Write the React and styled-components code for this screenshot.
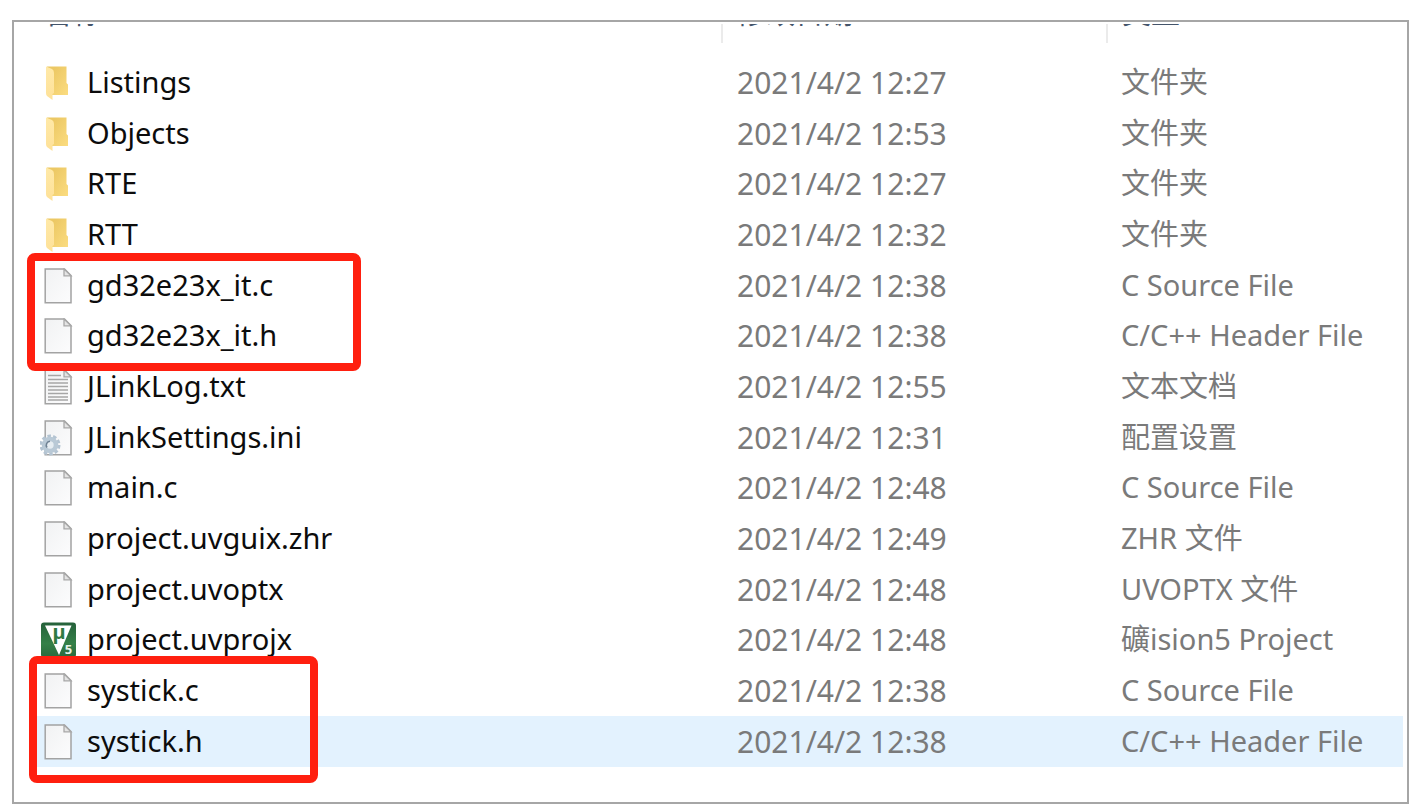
import React from "react";
import styled, { createGlobalStyle } from "styled-components";

const files = [
  { name: "Listings", icon: "folder", date: "2021/4/2 12:27", type: "文件夹" },
  { name: "Objects", icon: "folder", date: "2021/4/2 12:53", type: "文件夹" },
  { name: "RTE", icon: "folder", date: "2021/4/2 12:27", type: "文件夹" },
  { name: "RTT", icon: "folder", date: "2021/4/2 12:32", type: "文件夹" },
  { name: "gd32e23x_it.c", icon: "file", date: "2021/4/2 12:38", type: "C Source File" },
  { name: "gd32e23x_it.h", icon: "file", date: "2021/4/2 12:38", type: "C/C++ Header File" },
  { name: "JLinkLog.txt", icon: "text", date: "2021/4/2 12:55", type: "文本文档" },
  { name: "JLinkSettings.ini", icon: "settings", date: "2021/4/2 12:31", type: "配置设置" },
  { name: "main.c", icon: "file", date: "2021/4/2 12:48", type: "C Source File" },
  { name: "project.uvguix.zhr", icon: "file", date: "2021/4/2 12:49", type: "ZHR 文件" },
  { name: "project.uvoptx", icon: "file", date: "2021/4/2 12:48", type: "UVOPTX 文件" },
  { name: "project.uvprojx", icon: "uvision", date: "2021/4/2 12:48", type: "礦ision5 Project" },
  { name: "systick.c", icon: "file", date: "2021/4/2 12:38", type: "C Source File" },
  { name: "systick.h", icon: "file", date: "2021/4/2 12:38", type: "C/C++ Header File", selected: true },
];

const FolderIcon = () => (
  <Icon viewBox="0 0 36 36" aria-hidden="true">
    <path d="M7 1.5H26.5V18L28 19.5V30H12Z" fill="url(#folderBack)" />
    <path d="M6 1.5L12 4Q14 5 14 8V28L12.5 29V35L7 31Q6 30 6 28Z" fill="url(#folderFront)" />
  </Icon>
);

const Paper = () => (
  <>
    <path d="M5.2 1H24.5L31 7.5V34.8H5.2Z" fill="url(#paper)" stroke="#a3a3a3" strokeWidth="1.5" />
    <path d="M24 1V7.8H31Z" fill="#e4e4e4" stroke="#a8a8a8" strokeWidth="1.3" />
  </>
);

const FileIcon = () => (
  <Icon viewBox="0 0 36 36" aria-hidden="true">
    <Paper />
  </Icon>
);

const TextIcon = () => (
  <Icon viewBox="0 0 36 36" aria-hidden="true">
    <Paper />
    <path
      d="M8 6.5H21M8 10.5H28M8 14H28M8 17.5H28M8 21H28M8 24.5H28M8 28H28M8 31H28"
      stroke="#a6a6a6"
      strokeWidth="1.6"
    />
  </Icon>
);

const SettingsIcon = () => (
  <Icon viewBox="0 0 36 36" aria-hidden="true">
    <Paper />
    <circle cx="10" cy="25" r="8.8" fill="none" stroke="#b4c4d2" strokeWidth="3.4" strokeDasharray="3.4 2.13" />
    <circle cx="10" cy="25" r="6" fill="#e6edf2" stroke="#b9c9d6" strokeWidth="4.6" />
    <path d="M7 27.5A4 4 0 0 1 10 21.2" fill="none" stroke="#6f8294" strokeWidth="1.6" />
  </Icon>
);

const UvisionIcon = () => (
  <Icon viewBox="0 0 36 36" aria-hidden="true">
    <rect x="1" y="0.5" width="35" height="35" rx="3" fill="url(#uvision)" />
    <path d="M5 3.5H31.5L19 33Z" fill="#fff" />
    <text x="19" y="17" fontSize="20" fontWeight="700" textAnchor="middle" fill="#2f7a43">
      µ
    </text>
    <text x="28.5" y="32" fontSize="13" fontWeight="700" textAnchor="middle" fill="#e6f2e8">
      5
    </text>
  </Icon>
);

const icons = {
  folder: FolderIcon,
  file: FileIcon,
  text: TextIcon,
  settings: SettingsIcon,
  uvision: UvisionIcon,
};

// Gradients shared by all the row icons
const IconDefs = () => (
  <Defs aria-hidden="true">
    <defs>
      <linearGradient id="folderBack" x1="0" y1="0" x2="1" y2="1">
        <stop offset="0.2" stopColor="#ecc864" />
        <stop offset="1" stopColor="#fbdc80" />
      </linearGradient>
      <linearGradient id="folderFront" x1="0" y1="0" x2="0" y2="1">
        <stop offset="0" stopColor="#ffe9a8" />
        <stop offset="1" stopColor="#fee198" />
      </linearGradient>
      <linearGradient id="paper" x1="0" y1="0" x2="1" y2="1">
        <stop offset="0" stopColor="#f1f2f3" />
        <stop offset="1" stopColor="#fcfcfd" />
      </linearGradient>
      <linearGradient id="uvision" x1="0" y1="0" x2="0" y2="1">
        <stop offset="0" stopColor="#25613a" />
        <stop offset="0.6" stopColor="#348048" />
        <stop offset="1" stopColor="#2a6a3d" />
      </linearGradient>
    </defs>
  </Defs>
);

const App = () => {
  return (
    <Page>
      <GlobalStyle />
      <IconDefs />
      <Panel>
        <FileTable>
          <thead>
            <tr>
              <HeadCell scope="col">
                <HeadLabel>
                  <span>名称</span>
                </HeadLabel>
              </HeadCell>
              <HeadCell scope="col" $width="385px">
                <HeadLabel $divider>
                  <span>修改日期</span>
                </HeadLabel>
              </HeadCell>
              <HeadCell scope="col" $width="297px">
                <HeadLabel $divider>
                  <span>类型</span>
                </HeadLabel>
              </HeadCell>
            </tr>
          </thead>
          <tbody>
            {files.map((file) => {
              const RowIcon = icons[file.icon];
              return (
                <Row key={file.name} $selected={file.selected}>
                  <Cell>
                    <Name>
                      <RowIcon />
                      <Label>{file.name}</Label>
                    </Name>
                  </Cell>
                  <DateCell>{file.date}</DateCell>
                  <TypeCell>{file.type}</TypeCell>
                </Row>
              );
            })}
          </tbody>
        </FileTable>
        <Marker $top={231} $left={13} $width={334} $height={118} />
        <Marker $top={634} $left={15} $width={289} $height={127} />
      </Panel>
    </Page>
  );
};

const GlobalStyle = createGlobalStyle`
  * {
    box-sizing: border-box;
  }

  body {
    margin: 0;
    background: #fff;
    font-family: "Noto Sans", "Noto Sans CJK SC", sans-serif;
  }
`;

const Page = styled.main`
  padding: 20px 6px 8px 12px;
`;

const Panel = styled.section`
  position: relative;
  padding: 2px 4px 35px 22px;
  border: 2px solid #a6a6a6;
`;

const FileTable = styled.table`
  width: 100%;
  table-layout: fixed;
  border-collapse: collapse;
`;

const HeadCell = styled.th`
  width: ${({ $width }) => $width || "auto"};
  height: 33px;
  padding: 0;
  vertical-align: top;
  font-size: 29px;
  font-weight: 400;
  line-height: 32px;
  text-align: left;
  color: #44546a;
`;

const HeadLabel = styled.div`
  display: flex;
  align-items: flex-end;
  height: 19px;
  padding: 0 0 14px ${({ $divider }) => ($divider ? "14px" : "7px")};
  border-left: ${({ $divider }) => ($divider ? "2px solid #ebebeb" : "none")};
  overflow: hidden;
`;

const Row = styled.tr`
  height: 51px;
  background: ${({ $selected }) => ($selected ? "#e3f2fe" : "transparent")};

  &:nth-child(3n) {
    height: 50px;
  }
`;

const Cell = styled.td`
  padding: 0;
  font-size: 29px;
  line-height: 36px;
  white-space: nowrap;
  color: #0c0c0c;
`;

const DateCell = styled(Cell)`
  padding-left: 16px;
  font-size: 30px;
  color: #7a7a7a;
`;

const TypeCell = styled(Cell)`
  padding: 0 0 2px 15px;
  color: #7a7a7a;
`;

const Name = styled.div`
  display: flex;
  align-items: center;
  gap: 11px;
  padding-left: 4px;
`;

const Label = styled.span`
  padding-bottom: 2px;
`;

const Icon = styled.svg`
  flex: none;
  width: 36px;
  height: 36px;
`;

const Defs = styled.svg`
  position: absolute;
  width: 0;
  height: 0;
`;

const Marker = styled.div`
  position: absolute;
  top: ${({ $top }) => $top}px;
  left: ${({ $left }) => $left}px;
  width: ${({ $width }) => $width}px;
  height: ${({ $height }) => $height}px;
  border: 8px solid #ff1f0f;
  border-radius: 8px;
  pointer-events: none;
`;

export default App;
